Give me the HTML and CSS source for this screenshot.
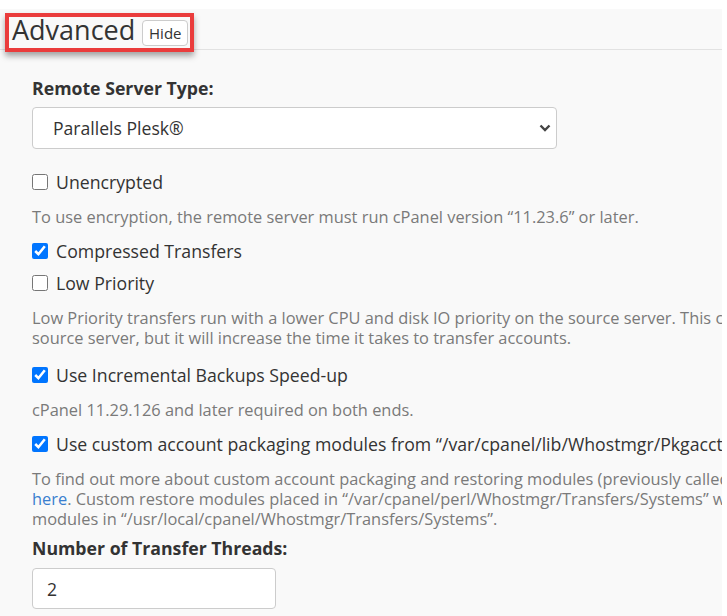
FILE: index.html
```html
<!DOCTYPE html>
<html lang="en">
<head>
<meta charset="utf-8">
<title>Advanced</title>
<link rel="stylesheet" href="styles.css">
</head>
<body>
<div class="panel">
  <div class="panel-header">
    <div class="highlight">
      <h2 class="title">Advanced</h2>
      <button class="btn-hide" type="button">Hide</button>
    </div>
  </div>
  <div class="panel-body">
    <div class="field">
      <label class="field-label" for="servertype">Remote Server Type:</label>
      <div class="select-wrap">
        <select id="servertype" class="select">
          <option>Parallels Plesk®</option>
        </select>
        <svg class="chevron" width="12" height="8" viewBox="0 0 12 8"><path d="M1.5 1.5 L6 6 L10.5 1.5" fill="none" stroke="#444" stroke-width="2.4"/></svg>
      </div>
    </div>

    <div class="option first">
      <label class="check"><input type="checkbox"><span>Unencrypted</span></label>
      <p class="help">To use encryption, the remote server must run cPanel version “11.23.6” or later.</p>
    </div>

    <div class="option">
      <label class="check"><input type="checkbox" checked><span>Compressed Transfers</span></label>
    </div>

    <div class="option tight">
      <label class="check"><input type="checkbox"><span>Low Priority</span></label>
      <p class="help">Low Priority transfers run with a lower CPU and disk IO priority on the source server. This can reduce the load on the<br>source server, but it will increase the time it takes to transfer accounts.</p>
    </div>

    <div class="option after-multi">
      <label class="check"><input type="checkbox" checked><span>Use Incremental Backups Speed-up</span></label>
      <p class="help">cPanel 11.29.126 and later required on both ends.</p>
    </div>

    <div class="option">
      <label class="check"><input type="checkbox" checked><span>Use custom account packaging modules from “/var/cpanel/lib/Whostmgr/Pkgacct”.</span></label>
      <p class="help">To find out more about custom account packaging and restoring modules (previously called “pkgacct modules”), click<br><a href="#">here</a>. Custom restore modules placed in “/var/cpanel/perl/Whostmgr/Transfers/Systems” will override the default<br>modules in “/usr/local/cpanel/Whostmgr/Transfers/Systems”.</p>
    </div>

    <div class="field threads">
      <label class="field-label" for="threads">Number of Transfer Threads:</label>
      <input id="threads" class="text-input" type="text" value="2">
    </div>
  </div>
</div>
</body>
</html>
```

FILE: styles.css
```css
html, body {
  margin: 0;
  padding: 0;
  background: #ffffff;
}

body {
  font-family: "Open Sans", "Liberation Sans", sans-serif;
  color: #333333;
  width: 727px;
  height: 616px;
  overflow: hidden;
}

.panel {
  margin-top: 9px;
  width: 722px;
  height: 607px;
  background: #f9f9f9;
  overflow: hidden;
}

.panel-header {
  height: 41px;
  box-sizing: border-box;
  padding: 4px 0 0 5px;
  border-bottom: 1px solid #e2e2e2;
}

.highlight {
  display: inline-flex;
  align-items: center;
  box-sizing: border-box;
  height: 39px;
  padding: 0 2px 0 3px;
  border: 4px solid #ea3c3c;
  background: #f9f9f9;
  box-shadow: 0 4px 6px rgba(0, 0, 0, 0.35);
}

.title {
  margin: 0 0 5px 0;
  font-size: 27px;
  font-weight: 400;
  line-height: 30px;
  color: #333333;
}

.btn-hide {
  margin-left: 7px;
  height: 26px;
  width: 46px;
  padding: 0;
  font-family: "Open Sans", "Liberation Sans", sans-serif;
  font-size: 15px;
  color: #333333;
  background: #ffffff;
  border: 1px solid #cccccc;
  border-radius: 4px;
}

.panel-body {
  padding: 27px 0 0 32px;
  width: 1100px;
}

.field-label {
  display: block;
  font-size: 17.7px;
  font-weight: 700;
  line-height: 22px;
  color: #333333;
}

.select-wrap {
  position: relative;
  margin-top: 8px;
  width: 525px;
}

.select {
  display: block;
  appearance: none;
  -webkit-appearance: none;
  width: 525px;
  height: 42px;
  box-sizing: border-box;
  padding: 0 0 0 20px;
  font-family: "Open Sans", "Liberation Sans", sans-serif;
  font-size: 17.6px;
  color: #333333;
  background: #ffffff;
  border: 1px solid #cccccc;
  border-radius: 4px;
}

.chevron {
  position: absolute;
  right: 6px;
  top: 17px;
}

.option {
  margin-top: 12px;
}

.option.first {
  margin-top: 21px;
}

.option.tight {
  margin-top: 8px;
}

.option.after-multi {
  margin-top: 15px;
}

.check {
  display: flex;
  align-items: center;
  gap: 8px;
  height: 24px;
  font-size: 17.7px;
  line-height: 24px;
  color: #333333;
  white-space: nowrap;
}

.check input {
  margin: 0;
  width: 16px;
  height: 16px;
  flex: none;
}

.help {
  margin: 13px 0 0 0;
  font-size: 16.4px;
  line-height: 20px;
  color: #7a7a7a;
  white-space: nowrap;
}

.help a {
  color: #3a7fcf;
  text-decoration: none;
}

.threads {
  margin-top: 8px;
}

.text-input {
  display: block;
  margin-top: 9px;
  width: 244px;
  height: 41px;
  box-sizing: border-box;
  padding: 0 14px;
  font-family: "Open Sans", "Liberation Sans", sans-serif;
  font-size: 17.6px;
  color: #333333;
  background: #ffffff;
  border: 1px solid #cccccc;
  border-radius: 4px;
}
```
